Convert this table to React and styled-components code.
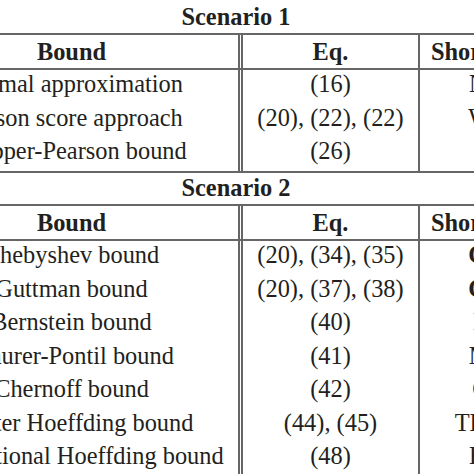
import React from 'react';
import styled, { createGlobalStyle, css } from 'styled-components';

const LINE = '#666666';

const SCENARIOS = [
  {
    title: 'Scenario 1',
    rows: [
      { bound: 'Normal approximation', eq: '(16)', short: 'NA' },
      { bound: 'Wilson score approach', eq: '(20), (22), (22)', short: 'WS' },
      { bound: 'Clopper-Pearson bound', eq: '(26)', short: 'C' },
    ],
  },
  {
    title: 'Scenario 2',
    rows: [
      { bound: 'Chebyshev bound', eq: '(20), (34), (35)', short: 'CH', bold: true },
      { bound: 'Guttman bound', eq: '(20), (37), (38)', short: 'CG', bold: true },
      { bound: 'Bernstein bound', eq: '(40)', short: 'Be' },
      { bound: 'Maurer-Pontil bound', eq: '(41)', short: 'MP' },
      { bound: 'Chernoff bound', eq: '(42)', short: 'Ch' },
      { bound: 'Tighter Hoeffding bound', eq: '(44), (45)', short: 'THoef' },
      { bound: 'Conventional Hoeffding bound', eq: '(48)', short: 'HO' },
    ],
  },
];

export default function App() {
  return (
    <>
      <GlobalStyle />
      <Frame>
        <Sheet>
          {SCENARIOS.map((sc) => (
            <section key={sc.title}>
              <Title>{sc.title}</Title>
              <Table>
                <Row $head>
                  <Cell $col={1}>Bound</Cell>
                  <Cell $col={2}>Eq.</Cell>
                  <Cell $col={3}>Shorthand</Cell>
                </Row>
                {sc.rows.map((r) => (
                  <Row key={r.bound}>
                    <Cell $col={1}>{r.bound}</Cell>
                    <Cell $col={2}>{r.eq}</Cell>
                    <Cell $col={3} $bold={r.bold}>{r.short}</Cell>
                  </Row>
                ))}
              </Table>
            </section>
          ))}
        </Sheet>
      </Frame>
    </>
  );
}

const GlobalStyle = createGlobalStyle`
  html, body {
    margin: 0;
    padding: 0;
    background: #ffffff;
  }
  body {
    font-family: "Liberation Serif", "Times New Roman", serif;
    color: #231f20;
  }
`;

const Frame = styled.div`
  width: 474px;
  height: 474px;
  overflow: hidden;
  background: #ffffff;
`;

const Sheet = styled.div`
  width: 662px;
  margin-left: -95px;
  padding-top: 1.5px;
  font-size: 24.4px;
`;

const Title = styled.div`
  text-align: center;
  font-weight: 700;
  line-height: 29px;
  padding-bottom: 2.5px;
`;

const Table = styled.div`
  border-top: 2px solid ${LINE};
  border-bottom: 2px solid ${LINE};
`;

const Row = styled.div`
  display: grid;
  grid-template-columns: 338px 177px 147px;

  ${({ $head }) =>
    $head
      ? css`
          height: 33px;
          line-height: 33px;
          font-weight: 700;
          border-bottom: 2px solid ${LINE};
        `
      : css`
          height: 33.5px;
          line-height: 28px;
        `}
`;

const Cell = styled.div`
  box-sizing: border-box;
  text-align: center;
  white-space: nowrap;
  font-weight: ${({ $bold }) => ($bold ? 700 : 'inherit')};

  ${({ $col }) =>
    $col === 1 &&
    css`
      border-right: 5px double ${LINE};
    `}
  ${({ $col }) =>
    $col === 2 &&
    css`
      border-right: 2px solid ${LINE};
    `}
  ${({ $col }) =>
    $col === 3 &&
    css`
      padding-right: 14px;
    `}
`;
